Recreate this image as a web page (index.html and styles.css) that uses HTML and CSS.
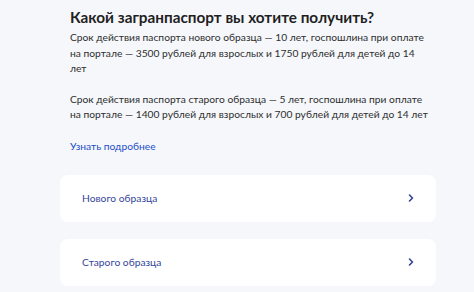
FILE: index.html
```html
<!DOCTYPE html>
<html lang="ru">
<head>
    <meta charset="UTF-8">
    <meta name="viewport" content="width=device-width, initial-scale=1.0">
    <title>Загранпаспорт</title>
    <link rel="stylesheet" href="styles.css">
</head>
<body>

<div class="page">
    <div class="intro">
        <h1>Какой загранпаспорт вы хотите получить?</h1>
        <p>Срок действия паспорта нового образца — 10 лет, госпошлина при оплате на портале — 3500 рублей для взрослых и 1750 рублей для детей до 14 лет</p>
        <p>Срок действия паспорта старого образца — 5 лет, госпошлина при оплате на портале — 1400 рублей для взрослых и 700 рублей для детей до 14 лет</p>
        <a class="more" href="#">Узнать подробнее</a>
    </div>

    <!-- Выбор типа паспорта -->
    <div class="options">
        <a class="option" href="#">
            <span>Нового образца</span>
            <svg width="8" height="10" viewBox="0 0 8 10"><path d="M2.5 2 5.5 5 2.5 8" fill="none" stroke="#33448f" stroke-width="1.6" stroke-linecap="round" stroke-linejoin="round"/></svg>
        </a>
        <a class="option" href="#">
            <span>Старого образца</span>
            <svg width="8" height="10" viewBox="0 0 8 10"><path d="M2.5 2 5.5 5 2.5 8" fill="none" stroke="#33448f" stroke-width="1.6" stroke-linecap="round" stroke-linejoin="round"/></svg>
        </a>
    </div>
</div>

</body>
</html>
```

FILE: styles.css
```css
body {
    margin: 0;
    background-color: #f5f7fb;
    font-family: Lato, "Noto Sans", sans-serif;
    color: #2e2e2e;
}
.page {
    width: 376px;
    margin-left: 60px;
    padding-top: 6px;
}
.intro {
    padding: 0 6px 0 10px;
}
h1 {
    margin: 0;
    font-size: 15.3px;
    font-weight: 700;
    line-height: 22px;
    color: #1f1f1f;
}
p {
    margin: 2px 0 15px;
    font-size: 10.25px;
    line-height: 15.5px;
}
.more {
    display: block;
    font-size: 10.25px;
    line-height: 16px;
    color: #1d4fc8;
    text-decoration: none;
}
.options {
    margin-top: 21px;
    display: flex;
    flex-direction: column;
    gap: 17px;
}
.option {
    display: flex;
    align-items: center;
    justify-content: space-between;
    height: 47px;
    padding: 0 21px 0 22px;
    background: #fff;
    border-radius: 8px;
    font-size: 10.25px;
    color: #34469a;
    text-decoration: none;
}
```
